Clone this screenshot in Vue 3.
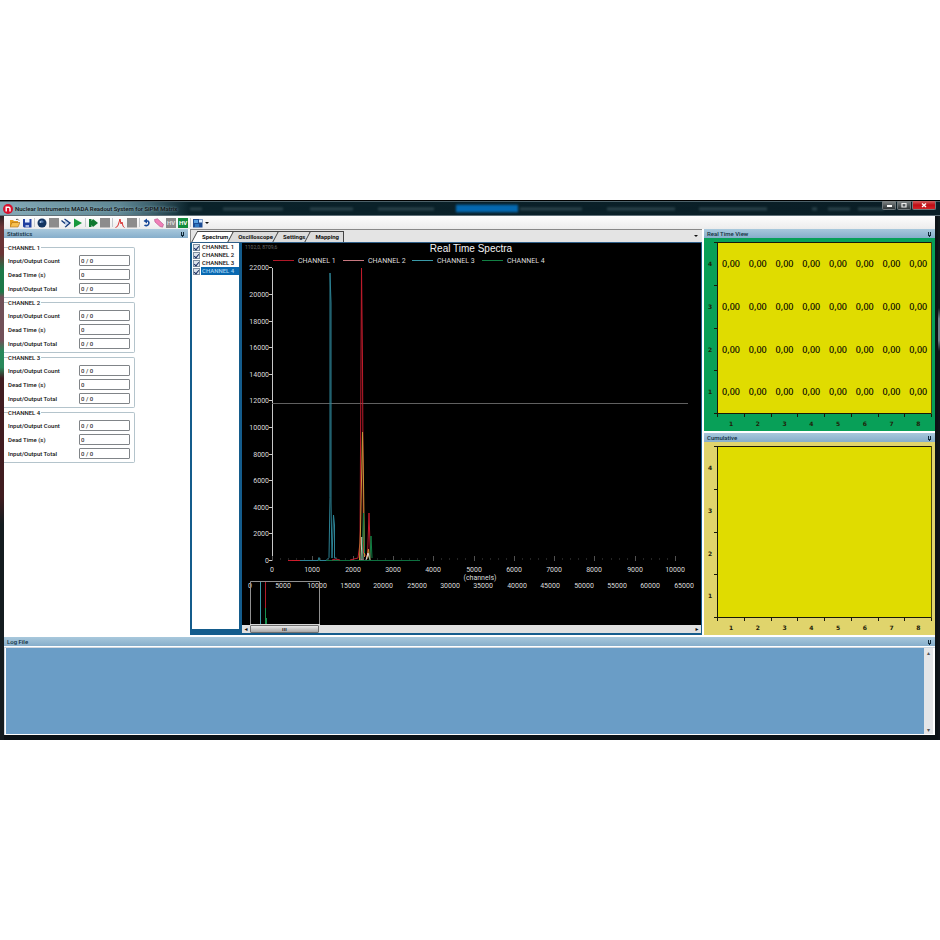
<script setup>
import { ref } from 'vue'

const channels = [
  { name: 'CHANNEL 1', color: '#b01828' },
  { name: 'CHANNEL 2', color: '#c87880' },
  { name: 'CHANNEL 3', color: '#3a9aa8' },
  { name: 'CHANNEL 4', color: '#128044' }
]
const enabled = ref([true, true, true, true])
const fields = [
  { label: 'Input/Output Count', value: '0 / 0' },
  { label: 'Dead Time (s)', value: '0' },
  { label: 'Input/Output Total', value: '0 / 0' }
]
const tabs = ['Spectrum', 'Oscilloscope', 'Settings', 'Mapping']
const activeTab = ref('Spectrum')

const tools = ['open', 'save', '|', 'globe', 'stop', 'edit', 'play', '|', 'run', 'stop', '|', 'peak', 'stop', '|', 'undo', 'erase', 'hvoff', 'hvon', '|', 'disk']

const yTicks = Array.from({ length: 12 }, (_, i) => ({ v: i * 2000, y: 318 - Math.round(i * 26.6) }))
const xTicks = Array.from({ length: 11 }, (_, i) => ({ v: i * 1000, x: 30 + Math.round(i * 40.3) }))
const minor = Array.from({ length: 50 }, (_, i) => 30 + Math.round(i * 8.06))
const overview = Array.from({ length: 14 }, (_, i) => ({ v: i * 5000, x: 8 + Math.round(i * 33.35) }))
const legendX = [31, 101, 170, 240]

const maps = [
  { title: 'Real Time View', kind: 'live', values: true },
  { title: 'Cumulative', kind: 'total', values: false }
]
const cols = [1, 2, 3, 4, 5, 6, 7, 8]
const rows = [4, 3, 2, 1]
const colX = (c) => 27 + (c - 1) * 26.75
const rowY = (i) => 26 + i * 42.75

const ghosts = [
  { x: 190, w: 12 }, { x: 223, w: 60 }, { x: 310, w: 43 }, { x: 378, w: 56 },
  { x: 520, w: 62 }, { x: 607, w: 68 }, { x: 699, w: 68 }, { x: 812, w: 5 }, { x: 828, w: 22 }, { x: 858, w: 26 }
]
</script>

<template>
  <div class="window">
    <header class="titlebar">
      <svg class="ghosts" viewBox="0 0 940 16" preserveAspectRatio="none" aria-hidden="true">
        <rect class="ghost-active" x="456" y="4" width="62" height="8" />
        <rect v-for="g in ghosts" :key="g.x" class="ghost" :x="g.x" y="7" :width="g.w" height="3" />
      </svg>
      <svg class="logo" viewBox="0 0 10 10" aria-hidden="true">
        <circle cx="5" cy="5" r="5" fill="#d8102c" />
        <path d="M3.200 7.500V3.200h2.500q1.300 0 1.300 1.300v3" fill="none" stroke="#fff" stroke-width="1.400" />
      </svg>
      <h1>Nuclear Instruments MADA Readout System for SiPM Matrix</h1>
      <div class="controls">
        <button aria-label="Minimize"><svg viewBox="0 0 12 8"><path d="M4 5h5" stroke="#fff" stroke-width="2" /></svg></button>
        <button aria-label="Maximize"><svg viewBox="0 0 12 8"><path d="M4 2.500h4v3.500H4z" fill="none" stroke="#eee" stroke-width="1.200" /></svg></button>
        <button class="close" aria-label="Close"><svg viewBox="0 0 12 8"><path d="M4 2.500l4 3.500M8 2.500L4 6" stroke="#fff" stroke-width="1.400" /></svg></button>
      </div>
    </header>

    <div class="client">
      <div class="toolbar">
        <template v-for="(t, i) in tools" :key="i">
          <span v-if="t === '|'" class="sep"></span>
          <button v-else :class="['tool', t]" :aria-label="t">
            <template v-if="t === 'hvoff' || t === 'hvon'">HV</template>
            <svg v-else viewBox="0 0 10 10">
              <template v-if="t === 'open'">
                <path d="M0 9V2h3l1 1h4v2" fill="#e8a020" /><path d="M0 9l2-4.500h8L8 9z" fill="#f8c050" stroke="#a86a10" stroke-width=".6" /><path d="M6 1.500q2-1 3 1" fill="none" stroke="#333" stroke-width=".8" />
              </template>
              <template v-else-if="t === 'save'">
                <path d="M1 1h8.500v8.500H2L1 8.500z" fill="#2040a0" /><path d="M3 1h4.500v3.500H3z" fill="#e8f0ff" /><path d="M3.500 7h3.500v2.500h-3.500z" fill="#a8b8e0" />
              </template>
              <template v-else-if="t === 'globe'">
                <circle cx="5" cy="5" r="4.500" fill="#123460" /><path d="M3 3l2-1 2 2-2 1zM6 6l2-1" fill="#4a70a8" /><circle cx="3.500" cy="4" r="1" fill="#a8c4e0" />
              </template>
              <rect v-else-if="t === 'stop'" width="10" height="9.500" fill="#8c8c8c" />
              <template v-else-if="t === 'edit'">
                <path d="M2 4.500L6 1.500 9 5 5.500 8z" fill="#c0d0e8" />
                <path d="M0.500 2.500L4 5.500M3.500 1l5.500 4M9.500 4.500L5 8.500 4 9" stroke="#123878" stroke-width="1.300" fill="none" />
              </template>
              <path v-else-if="t === 'play'" d="M1 0.500v9L9 5z" fill="#18983c" />
              <path v-else-if="t === 'run'" d="M1 1v8h2.500V7L5 9l5-4-5-4-1.500 2V1z" fill="#107830" />
              <path v-else-if="t === 'peak'" d="M0.500 9.500Q3 9 3.500 6L5 1l1 5 1-2 1 4q.5 1 1.500 1.500" fill="none" stroke="#d83030" />
              <template v-else-if="t === 'undo'">
                <path d="M4 3h2a2.500 2.500 0 1 1-3.500 4" fill="none" stroke="#184898" stroke-width="1.600" /><path d="M5 .5v5L1.500 3z" fill="#184898" />
              </template>
              <path v-else-if="t === 'erase'" d="M.5 1.500L3.500 .8 9.500 6.500 8.500 9.200 6 8.500 1 4z" fill="#f080b8" stroke="#b05088" stroke-width=".6" />
              <template v-else>
                <path d="M0 1h9.500v8.500H0z" fill="#1c4c94" /><path d="M1 2h4v3H1z" fill="#58a0e0" /><path d="M6 1.500h3v3H6z" fill="#d8ecff" /><path d="M2 6h4v3H2z" fill="#3078c0" />
              </template>
            </svg>
          </button>
        </template>
        <span class="caret"></span>
      </div>

      <main class="panes">
        <section class="pane">
          <h2 class="bar">Statistics<i class="pin"></i></h2>
          <div class="stats">
            <fieldset v-for="(ch, c) in channels" :key="ch.name">
              <legend>{{ ch.name }}</legend>
              <div v-for="(f, i) in fields" :key="f.label" class="field">
                <label :for="`f${c}-${i}`">{{ f.label }}</label>
                <input :id="`f${c}-${i}`" type="text" :value="f.value" readonly />
              </div>
            </fieldset>
          </div>
        </section>

        <section class="center">
          <nav class="tabs">
            <button v-for="t in tabs" :key="t" :class="{ active: t === activeTab }" @click="activeTab = t">{{ t }}</button>
            <span class="caret more"></span>
          </nav>
          <div class="work">
            <div class="list">
              <label v-for="(ch, i) in channels" :key="ch.name">
                <input v-model="enabled[i]" type="checkbox" /><span :class="{ selected: i === 3 }">{{ ch.name }}</span>
              </label>
            </div>
            <div class="plot">
              <svg class="chart" viewBox="0 0 459 382">
                <text class="hint" x="3" y="6">1102,0, 8709,6</text>
                <text class="title" x="229" y="9">Real Time Spectra</text>
                <g v-for="(ch, i) in channels" :key="ch.name">
                  <path :d="`M${legendX[i]} 17.500h21`" :stroke="ch.color" />
                  <text :x="legendX[i] + 25" y="20">{{ ch.name }}</text>
                </g>
                <path d="M30.500 25V318" stroke="#c8c8c8" />
                <g v-for="t in yTicks" :key="t.v">
                  <path :d="`M27 ${t.y - 0.5}h3`" stroke="#c8c8c8" />
                  <text class="end" x="27" :y="t.y + 2">{{ t.v }}</text>
                </g>
                <path v-for="x in minor" :key="x" :d="`M${x + 0.5} 315v2`" stroke="#242424" />
                <g v-for="t in xTicks" :key="t.v">
                  <path :d="`M${t.x + 0.5} 313v5`" stroke="#505050" />
                  <text class="mid" :x="t.x" y="329">{{ t.v }}</text>
                </g>
                <path d="M30 160.500H446" stroke="#606060" />
                <text class="mid" x="238" y="337">(channels)</text>

                <g fill="none">
                  <path d="M60 317.500H178" stroke="#0e7040" />
                  <path d="M46 317.500h20M90 317l4-1 4 1M108 317l8-2 2-15 1.500-275L120.500 120l1 190 4 4 1.500-44 1.500 47" stroke="#c01c2c" />
                  <path d="M117.500 317l1-30 2-98 1 50 1 75M125 316l1.500-10 1 9" stroke="#c89838" />
                  <path d="M119 317l1-23 1 23M124 317l2-7 2 7" stroke="#e8d8d8" />
                  <path d="M120 316l1.500-46 1 40M128 317l1-24 1 22" stroke="#128044" />
                  <path d="M56 317.500h20l1-3 1 3h6l3-3 1-60V30l1 30v200l1 55 1.500-43 1 10v33h2" stroke="#2c8294" />
                  <path d="M50 317.500h8" stroke="#d01c2c" />
                </g>

                <text v-for="t in overview" :key="t.v" class="mid" :x="t.x" y="345">{{ t.v }}</text>
                <g fill="none">
                  <path d="M18.500 339v43" stroke="#3a9aa8" />
                  <path d="M23.500 339v43" stroke="#b01c28" />
                  <path d="M23.500 365v17M24.500 375v7" stroke="#189050" />
                  <path d="M8.500 381.500V338.500H77.500V381.500" stroke="#909090" />
                  <path d="M8 381.500h70" stroke="#d8d8d8" />
                </g>
              </svg>
              <div class="hscroll">
                <button aria-label="Scroll left">◂</button>
                <div class="thumb">ııı</div>
                <span class="track"></span>
                <button aria-label="Scroll right">▸</button>
              </div>
            </div>
          </div>
        </section>

        <section class="maps">
          <div v-for="m in maps" :key="m.title" class="pane">
            <h2 class="bar">{{ m.title }}<i class="pin"></i></h2>
            <svg :class="['map', m.kind]" viewBox="0 0 231 193">
              <rect x="13.500" y="4.500" width="214" height="171" fill="#e0dc00" stroke="#4c4a10" />
              <path d="M10 4.500H227M13.500 4V179M10 175.500H227" fill="none" stroke="#181808" />
              <path v-for="i in 3" :key="`h${i}`" :d="`M10 ${Math.round(i * 42.75) + 4.5}h3`" stroke="#181808" />
              <path v-for="i in 8" :key="`v${i}`" :d="`M${Math.round(i * 26.75) + 13.5} 176v3`" stroke="#181808" />
              <text v-for="c in cols" :key="`c${c}`" class="axis" :x="colX(c)" y="188">{{ c }}</text>
              <g v-for="(r, i) in rows" :key="`r${r}`">
                <text class="axis" x="6" :y="rowY(i) + 2">{{ r }}</text>
                <template v-if="m.values">
                  <text v-for="c in cols" :key="c" class="value" :x="colX(c)" :y="rowY(i) + 3">0,00</text>
                </template>
              </g>
            </svg>
          </div>
        </section>
      </main>

      <section class="log">
        <h2 class="bar">Log File<i class="pin"></i></h2>
        <div class="logbody">
          <textarea readonly aria-label="Log File"></textarea>
          <div class="vscroll">
            <button aria-label="Scroll up">▴</button>
            <button aria-label="Scroll down">▾</button>
          </div>
        </div>
      </section>
    </div>
  </div>
</template>

<style>
body {
  background: #fff;
}
</style>

<style scoped>
* {
  box-sizing: border-box;
}
.window {
  margin-top: 200px;
  padding: 0 5px 5px 4px;
  font: 500 6px/7px Roboto, "Liberation Sans", Arial, sans-serif;
  color: #101010;
  background: linear-gradient(#10181c 0 2%, #6a3436 5% 10%, #1c7848 13% 17%, #705058 18% 26%, #28885a 28% 31%, #401c20 33% 55%, #141c20 60% 100%) left / 4px 100% no-repeat,
    linear-gradient(#10181c 0 20%, #708088 22% 26%, #10141a 28% 100%) right / 2px 100% no-repeat,
    #0c1216;
}
button {
  padding: 0;
  border: 0;
  font: inherit;
  color: inherit;
  background: none;
}
.titlebar {
  position: relative;
  display: flex;
  align-items: center;
  gap: 2px;
  height: 16px;
  margin: 0 -5px 0 -4px;
  padding-left: 3px;
  border-top: 1px solid #000;
  background: linear-gradient(90deg, #84aab8 0, #5f8794 120px, #3e626e 150px, #0a222a 190px, #0a1e26 100%);
  box-shadow: inset 0 1px #4c6068, inset 0 -1px #607078;
}
.titlebar h1 {
  position: relative;
  flex: 1;
  margin: 0;
  font-size: 6px;
  font-weight: 500;
  text-shadow: 0 0 3px #9cc0cc;
}
.logo {
  position: relative;
  width: 10px;
  height: 10px;
}
.ghosts {
  position: absolute;
  inset: 0;
  width: 100%;
  height: 100%;
  filter: blur(1px);
}
.ghost {
  fill: #2c444c;
}
.ghost-active {
  fill: #0468b0;
}
.controls {
  position: relative;
  display: flex;
  align-self: flex-start;
  gap: 1px;
  margin-right: 4px;
}
.controls button {
  width: 14px;
  height: 9px;
  border: 1px solid #70787c;
  border-top: 0;
  border-radius: 0 0 2px 2px;
  background: linear-gradient(#808688, #303638);
}
.controls .close {
  width: 24px;
  background: linear-gradient(#d06060, #c00c14 50%, #d02428);
}
.controls svg {
  display: block;
  width: 12px;
  height: 8px;
  margin: 0 auto;
}
.client {
  background: #fff;
}
.toolbar {
  display: flex;
  align-items: center;
  gap: 2px;
  height: 13px;
  padding-left: 6px;
  background: linear-gradient(#fdfdfd, #ececec);
}
.tool {
  width: 10px;
  height: 10px;
}
.tool svg {
  display: block;
  width: 10px;
  height: 10px;
}
.hvoff,
.hvon {
  font-size: 6px;
  font-weight: 700;
  line-height: 10px;
  color: #ddd;
  background: #8a8a8a;
}
.hvon {
  color: #fff;
  background: #128c3c;
}
.sep {
  width: 1px;
  height: 9px;
  background: #c4c8cc;
}
.caret {
  border: 2px solid transparent;
  border-top-color: #111;
  border-bottom: 0;
}
.panes {
  display: grid;
  grid-template-columns: 184fr 512fr 231fr;
  gap: 2px;
}
.bar {
  display: flex;
  align-items: center;
  justify-content: space-between;
  height: 9px;
  margin: 0;
  padding: 0 4px 0 3px;
  font-size: 6px;
  font-weight: 500;
  color: #123040;
  background: linear-gradient(#a8c8dc, #86aecb);
}
.pin {
  width: 3px;
  height: 4px;
  border: 1px solid #102838;
  border-top-width: 0;
  position: relative;
}
.pin::after {
  content: "";
  position: absolute;
  left: 0;
  top: 3px;
  width: 1px;
  height: 2px;
  background: #102838;
}
.stats {
  width: 131px;
  padding-top: 6px;
}
fieldset {
  display: grid;
  gap: 3px;
  min-width: 0;
  margin: 0 0 1px;
  padding: 4px 4px 3px;
  border: 1px solid #b4c4cc;
  border-left: 0;
  border-radius: 0 2px 2px 0;
}
legend {
  padding: 0 1px 0 0;
  height: 7px;
}
.field {
  display: grid;
  grid-template-columns: 1fr 51px;
  align-items: center;
}
.field input {
  width: 100%;
  height: 11px;
  padding: 0 1px;
  border: 1px solid #808488;
  border-radius: 1px;
  font: inherit;
  color: #333;
  background: #fff;
}
.center {
  display: flex;
  flex-direction: column;
}
.tabs {
  display: flex;
  align-items: flex-end;
  height: 14px;
  padding-left: 6px;
  border-top: 1px solid #888;
  border-left: 1px solid #888;
  border-bottom: 1px solid #30608a;
  background: #e4e4e4;
}
.tabs button {
  position: relative;
  height: 11px;
  padding: 0 4px 0 5px;
  border-top: 1px solid #444;
  border-right: 1px solid #444;
  font-weight: 700;
  line-height: 10px;
  background: #dcdcdc;
}
.tabs button::before {
  content: "";
  position: absolute;
  left: -3px;
  top: 0;
  width: 6px;
  height: 10px;
  border-left: 1px solid #444;
  background: inherit;
  transform: skewX(-28deg);
}
.tabs .active {
  background: #fff;
}
.more {
  margin: 0 4px 5px auto;
}
.work {
  display: flex;
  flex: 1;
  gap: 3px;
  padding: 0 1px 2px 2px;
  background: #145c8c;
}
.list {
  display: flex;
  flex-direction: column;
  width: 47px;
  margin-bottom: 4px;
  background: #fff;
}
.list label {
  display: flex;
  align-items: center;
  gap: 1px;
  height: 8px;
  padding-left: 1px;
}
.list span {
  flex: 1;
  line-height: 8px;
  padding-left: 1px;
}
.list .selected {
  color: #a0d0f0;
  background: #0868b0;
}
.list input {
  appearance: none;
  position: relative;
  width: 7px;
  height: 7px;
  margin: 0;
  border: 1px solid #8090a0;
  background: #dce4ec;
}
.list input:checked::after {
  content: "";
  position: absolute;
  left: 1px;
  top: 0;
  width: 2px;
  height: 4px;
  border: solid #182c60;
  border-width: 0 1px 1px 0;
  transform: rotate(40deg);
}
.plot {
  flex: 1;
  min-width: 0;
  background: #000;
}
.chart {
  display: block;
  width: 100%;
  background: #000;
}
.chart text {
  font-size: 7px;
  font-weight: 400;
  fill: #dcdcdc;
}
.chart .title {
  font-family: "Liberation Sans", Arial, sans-serif;
  font-size: 10px;
  text-anchor: middle;
  fill: #f4f4f4;
}
.chart .hint {
  font-size: 5px;
  fill: #686868;
}
.chart .end {
  text-anchor: end;
}
.chart .mid {
  text-anchor: middle;
}
.hscroll {
  display: flex;
  height: 8px;
  line-height: 8px;
  background: #e0e0e0;
}
.hscroll button {
  width: 8px;
  font-family: "DejaVu Sans", sans-serif;
}
.track {
  flex: 1;
}
.thumb {
  width: 15%;
  border: 1px solid #707070;
  border-radius: 1px;
  line-height: 5px;
  text-align: center;
  background: linear-gradient(#e8e8e8, #a8a8a8);
}
.maps {
  display: flex;
  flex-direction: column;
  gap: 2px;
}
.map {
  display: block;
  width: 100%;
}
.live {
  background: #08a058;
}
.total {
  background: #e0d46c;
}
.map text {
  text-anchor: middle;
}
.axis {
  font: 700 6px "DejaVu Sans", sans-serif;
  fill: #202008;
}
.value {
  font: 500 9px "Noto Sans", sans-serif;
  fill: #080800;
}
.log {
  margin-top: 2px;
}
.logbody {
  display: flex;
  height: 88px;
  margin-top: 1px;
  padding: 0 2px 1px 1px;
  border: 1px solid #d0d8e0;
  border-width: 1px 0 0 1px;
}
.logbody textarea {
  flex: 1;
  padding: 2px;
  border: 0;
  resize: none;
  outline: 0;
  font: inherit;
  background: #6a9dc6;
}
.vscroll {
  display: flex;
  flex-direction: column;
  justify-content: space-between;
  width: 9px;
  font-family: "DejaVu Sans", sans-serif;
  color: #555;
  background: #e4e6e8;
}
.vscroll button {
  height: 9px;
}
</style>
